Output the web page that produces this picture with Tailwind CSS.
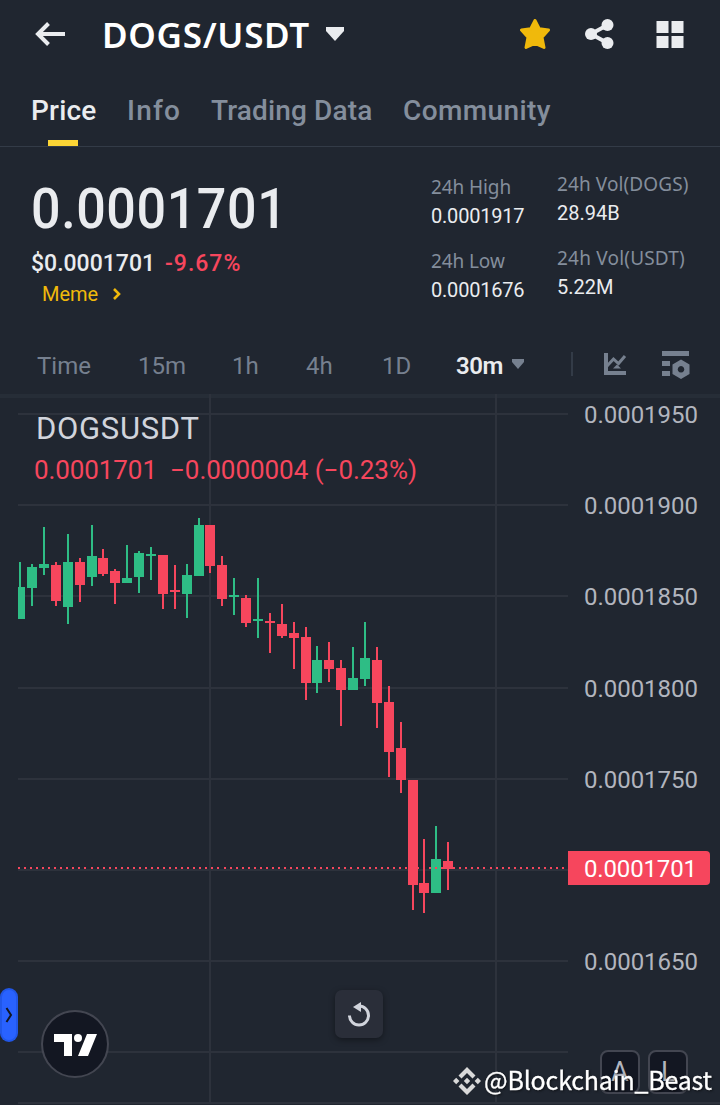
<!DOCTYPE html>
<html lang="en">
<head>
<meta charset="utf-8">
<title>DOGS/USDT</title>
<script src="https://cdn.jsdelivr.net/npm/@tailwindcss/browser@4"></script>
</head>
<body class="bg-[#202630] font-['Roboto',sans-serif] text-[#eaecef]">
<div class="relative flex h-[1105px] w-[720px] flex-col overflow-hidden whitespace-nowrap">
  <header class="flex h-[72px] shrink-0 items-center pl-[34px] pr-[35px]">
    <svg class="-mt-1 h-6 w-8" viewBox="0 0 32 24" fill="none" stroke="#eaecef" stroke-width="4"><path d="M31 12H4M14.5 1.500 4 12l10.500 10.500"/></svg>
    <h1 class="-mt-[2px] ml-[36px] w-[224px] font-['Noto_Sans',sans-serif] text-[35px] font-semibold leading-[70px] tracking-[0.7px] text-white">DOGS/USDT</h1>
    <svg class="-mt-1 h-[14px] w-[18px]" viewBox="0 0 18 14"><path d="M0 0h18v4L9 14 0 4z" fill="#eaecef"/></svg>
    <svg class="-mt-1 ml-auto h-[30px] w-[30px]" viewBox="0 0 30 30"><path d="M15 1.500 19.200 9.700 28.500 11 22 18.200 24 28.500 15 24.500 6 28.500 8 18.200 1.500 11 10.800 9.700z" fill="#f0b90b" stroke="#f0b90b" stroke-width="3" stroke-linejoin="round"/></svg>
    <svg class="-mt-1 ml-[35px] h-[30px] w-[29px]" viewBox="0 0 29 30" fill="#eaecef"><path d="M22.500 6 6 15l16.500 9" fill="none" stroke="#eaecef" stroke-width="4"/><circle cx="6" cy="15" r="6"/><circle cx="22.500" cy="6" r="6"/><circle cx="22.500" cy="24" r="6"/></svg>
    <svg class="-mt-1 ml-[42px] h-[28px] w-[29px]" viewBox="0.500 0 29 28" fill="#eaecef"><path d="M1 1h12v12H1zM16 1h12v12H16zM1 16h12v12H1zM16 16h12v12H16z"/></svg>
  </header>
  <nav class="flex h-[75px] shrink-0 border-b border-[#333b47] pl-[31px] text-[28px] font-medium leading-[77px] tracking-[0.4px] text-[#848e9c]">
    <div class="relative w-[96px] tracking-[0.2px] text-[#eaecef]">Price<i class="absolute bottom-0 left-[17px] h-[6px] w-[30px] bg-[#fcd535]"></i></div>
    <div class="w-[84px] tracking-[1.2px]">Info</div>
    <div class="w-[192px] tracking-[0.15px]">Trading Data</div>
    <div>Community</div>
  </nav>
  <section class="flex h-[187px] shrink-0 pl-[31px]">
    <div class="w-[400px]">
      <div class="mt-[28px] h-[66px] origin-left scale-x-[0.93] text-[56px] font-medium leading-[69px] tracking-[0.6px]">0.0001701</div>
      <div class="flex h-[43px] text-[23px] font-medium leading-[46px]"><span class="w-[134px]">$0.0001701</span><span class="tracking-[1px] text-[#f6465d]">-9.67%</span></div>
      <div class="flex h-[20px] items-center pl-[11px] text-[20px] leading-[20px] text-[#f0b90b]"><span class="w-[71px]">Meme</span><svg class="h-[12px] w-[8px]" viewBox="0 0 8 12" fill="none" stroke="#f0b90b" stroke-width="2.600"><path d="m1 1 5 5-5 5"/></svg></div>
    </div>
    <dl class="w-[126px] pt-[25px] text-[20px] tracking-[-0.2px]">
      <dt class="h-[30px] font-['Noto_Sans',sans-serif] text-[19px] leading-[31px] tracking-[-0.1px] text-[#848e9c]">24h High</dt><dd class="h-[44px] leading-[29px]">0.0001917</dd>
      <dt class="h-[30px] font-['Noto_Sans',sans-serif] text-[19px] leading-[31px] tracking-[-0.1px] text-[#848e9c]">24h Low</dt><dd class="leading-[29px]">0.0001676</dd>
    </dl>
    <dl class="pt-[22px] text-[20px]">
      <dt class="h-[30px] font-['Noto_Sans',sans-serif] text-[19px] leading-[31px] tracking-[0.1px] text-[#848e9c]">24h Vol(DOGS)</dt><dd class="h-[44px] leading-[29px]">28.94B</dd>
      <dt class="h-[30px] font-['Noto_Sans',sans-serif] text-[19px] leading-[31px] tracking-[0.2px] text-[#848e9c]">24h Vol(USDT)</dt><dd class="leading-[29px]">5.22M</dd>
    </dl>
  </section>
  <div class="flex h-[60px] shrink-0 items-center pl-[37px] pt-[4px] text-[24px] text-[#76808f]">
    <span class="w-[101px]">Time</span><span class="w-[94px]">15m</span><span class="w-[74px]">1h</span><span class="w-[76px]">4h</span><span class="w-[74px]">1D</span><span class="w-[56px] font-semibold tracking-[-0.4px] text-[#eaecef]">30m</span>
    <svg class="-mt-1 h-[10px] w-[12px]" viewBox="0 0 12 10"><path d="M0 0h12v3L6 10 0 3z" fill="#76808f"/></svg>
    <i class="-mt-1 ml-[47px] h-6 w-[2px] bg-[#333b47]"></i>
    <svg class="-mt-1 ml-[31px] h-[24px] w-[24px]" viewBox="0 0 24 24" fill="none" stroke="#76808f" stroke-width="4"><path d="M2 1v20h20"/><path d="m3 14 6.500-7 5 4.500L21 4" stroke-width="3"/><path d="m13 12.500 4 4H9z" fill="#76808f" stroke="none"/></svg>
    <svg class="-mt-1 ml-[33px] h-[30px] w-[29px]" viewBox="0 0 29 30" fill="#76808f"><path d="M1 2h27v5H1zM1 12h8v5H1zM1 22h8v5H1z"/><path fill-rule="evenodd" d="m20 10.500 8.500 5v9.500l-8.500 5-8.500-5v-9.500zM20 17a3.300 3.300 0 1 0 .01 0z"/></svg>
  </div>
  <svg class="h-[711px] w-[720px] shrink-0" viewBox="0 394 720 711" font-family="Roboto, sans-serif">
    <g fill="#2d323c" shape-rendering="crispEdges">
      <path fill="#262d37" d="M0 394h720v4H0z"/>
      <path d="M18 413h550v2H18zM18 504h550v2H18zM18 595h550v2H18zM18 687h550v2H18zM18 778h550v2H18zM18 869h550v2H18zM18 960h550v2H18zM18 1051h550v2H18zM18 1102h702v2H18z"/>
      <path d="M209 394h2v708h-2zM495 394h2v708h-2z"/>
    </g>
    <g id="candles" shape-rendering="crispEdges"></g>
    <path d="M18 868H568" stroke="#f6465d" stroke-width="2" stroke-dasharray="2 4.045" shape-rendering="crispEdges"/>
    <text x="36" y="439" font-size="31" fill="#d1d4dc" textLength="163">DOGSUSDT</text>
    <g font-size="26" fill="#f6465d">
      <text x="34" y="479" textLength="123">0.0001701</text>
      <text x="170" y="479" textLength="247">−0.0000004 (−0.23%)</text>
    </g>
    <g font-size="24" fill="#b2b5be">
      <text x="584" y="423" textLength="114">0.0001950</text>
      <text x="584" y="514" textLength="114">0.0001900</text>
      <text x="584" y="605" textLength="114">0.0001850</text>
      <text x="584" y="697" textLength="114">0.0001800</text>
      <text x="584" y="788" textLength="114">0.0001750</text>
      <text x="584" y="970" textLength="114">0.0001650</text>
    </g>
    <path d="M568 851h138a4 4 0 0 1 4 4v26a4 4 0 0 1-4 4H568z" fill="#f6465d"/>
    <text x="584" y="877" font-size="24" fill="#fff" textLength="113">0.0001701</text>

    <rect x="0" y="988" width="18" height="54" rx="9" fill="#2157e8"/>
    <rect x="2" y="990" width="14" height="50" rx="7" fill="#2962ff"/>
    <path d="m6.500 1008 4.500 7-4.500 7" fill="none" stroke="#131722" stroke-width="2"/>
    <circle cx="75" cy="1044" r="33" fill="#131722" stroke="#434651" stroke-width="2"/>
    <path d="M54 1034h18v22h-8v-14H54zM87 1034h10l-9 22H78z" fill="#fff"/><circle cx="78" cy="1038" r="4" fill="#fff"/>
    <rect x="335" y="990" width="48" height="48" rx="7" fill="#2a2e39" style="filter:drop-shadow(0 2px 3px #0006)"/>
    <path d="M349.500 1015.500a9.500 9.500 0 1 0 9.500-9.500" fill="none" stroke="#d1d4dc" stroke-width="3"/>
    <path d="m353 1007 8-5v10z" fill="#d1d4dc"/>
    <rect x="601" y="1051" width="38" height="42" rx="7" fill="#131722" stroke="#434651" stroke-width="2"/>
    <rect x="649" y="1051" width="38" height="42" rx="7" fill="#131722" stroke="#434651" stroke-width="2"/>
    <g font-size="27" fill="#b2b5be"><text x="611" y="1081">A</text><text x="661" y="1081">L</text></g>
    <g fill="#d9d9d9">
      <path d="m467 1067 8.500 8.500-3 3-5.500-5.500-5.500 5.500-3-3zM467 1095l8.500-8.500-3-3-5.500 5.500-5.500-5.500-3 3zM467 1077.800l3.200 3.200-3.200 3.200-3.200-3.200zM456.200 1077.800l3.200 3.200-3.200 3.200-3.200-3.200zM477.800 1077.800l3.200 3.200-3.200 3.200-3.200-3.200z"/>
    </g>
    <text x="484" y="1090" font-size="25" font-weight="400" stroke="#fff" stroke-width="0.300" font-family="Noto Sans CJK SC, sans-serif" fill="#fff" textLength="228" style="filter:drop-shadow(1px 1px 1px #0008)">@Blockchain_Beast</text>
  </svg>
</div>
<script>
// Each candle: body left, high, low, body top, body bottom, rising (1) or falling (0)
const candles = [
[15,562,619,587,619,1],[27,564,606,567,588,1],[39,527,575,564,568,1],[51,562,606,565,601,0],[63,534,624,562,607,1],
[75,558,602,562,585,0],[87,525,586,556,577,1],[98,549,576,558,574,0],[110,569,604,571,583,0],[122,545,583,578,583,1],
[134,551,593,553,577,1],[146,547,580,554,556,1],[158,555,609,555,594,0],[170,565,609,590,592,0],[182,564,618,575,594,1],
[194,518,576,525,576,1],[205,525,573,525,566,0],[217,556,606,565,599,0],[229,578,615,595,597,1],[241,595,627,598,623,0],
[253,578,638,619,621,1],[265,613,653,621,623,0],[277,604,638,624,636,0],[289,622,669,633,638,0],[301,627,700,637,683,0],
[312,646,693,660,683,1],[324,642,682,660,669,0],[336,660,726,668,690,0],[348,647,690,678,690,1],[360,622,686,658,679,1],
[372,647,728,660,703,0],[384,686,777,702,752,0],[396,722,793,748,780,0],[408,780,910,780,885,0],[419,839,913,883,893,0],
[431,826,893,859,893,1],[443,842,890,861,869,0]];
document.getElementById('candles').innerHTML = candles.map(([x,h,l,t,b,up]) => {
  const left = Math.max(18, x), right = x + 10;
  return `<path fill="${up ? '#2ebd85' : '#f6465d'}" d="M${x+4} ${h}h2V${l}h-2zM${left} ${t}H${right}V${b}H${left}z"/>`;
}).join('');
</script>
</body>
</html>
